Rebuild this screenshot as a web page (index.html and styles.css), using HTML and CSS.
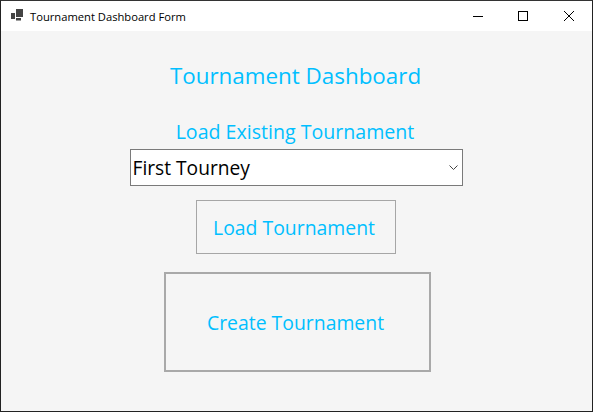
FILE: index.html
```html
<!DOCTYPE html>
<html>
<head>
	<meta charset="utf-8">
	<title>Tournament Dashboard Form</title>
	<link rel="stylesheet" href="styles.css">
</head>
<body>
<div class="win">
	<div class="titlebar">
		<svg class="appicon" width="16" height="16" viewBox="0 0 16 16">
			<rect x="1" y="5" width="4" height="6" fill="#444"/>
			<rect x="6" y="1" width="7" height="8" fill="#444"/>
			<rect x="6" y="10" width="5" height="2.5" fill="#444"/>
		</svg>
		<span class="wintitle">Tournament Dashboard Form</span>
		<div class="winbtns">
			<div class="winbtn">
				<svg width="12" height="12" viewBox="0 0 12 12"><path d="M1 6.5H11" stroke="#000" fill="none"/></svg>
			</div>
			<div class="winbtn winbtn-max">
				<svg width="12" height="12" viewBox="0 0 12 12"><rect x="1.5" y="1.5" width="9" height="9" stroke="#000" fill="none"/></svg>
			</div>
			<div class="winbtn">
				<svg width="12" height="12" viewBox="0 0 12 12"><path d="M1 1L11 11M11 1L1 11" stroke="#000" fill="none"/></svg>
			</div>
		</div>
	</div>
	<div class="form">
		<h1 class="heading">Tournament Dashboard</h1>
		<div class="label">Load Existing Tournament</div>
		<div class="combo">
			<span>First Tourney</span>
			<svg width="9" height="5" viewBox="0 0 9 5"><path d="M0.5 0.5L4.5 4.5L8.5 0.5" stroke="#444" fill="none"/></svg>
		</div>
		<button class="btn btn-load">Load Tournament</button>
		<button class="btn btn-create">Create Tournament</button>
	</div>
</div>
</body>
</html>
```

FILE: styles.css
```css
body{
	margin:0;
	padding:0;
	background:#f5f5f5;
	font-family:"Open Sans","Noto Sans",sans-serif;
}
.win{
	box-sizing:border-box;
	width:593px;
	height:412px;
	border:1px solid #222;
	border-top-color:#333;
	background:#f5f5f5;
	display:flex;
	flex-direction:column;
}
.titlebar{
	height:30px;
	background:#fff;
	display:flex;
	align-items:center;
	padding-left:9px;
	flex-shrink:0;
}
.appicon{
	margin-right:4px;
}
.wintitle{
	font-size:11.2px;
	color:#000;
}
.winbtns{
	margin-left:auto;
	margin-right:1px;
	display:flex;
}
.winbtn{
	width:44px;
	height:30px;
	display:flex;
	align-items:center;
	justify-content:center;
}
.winbtn-max{
	margin:0 2px 0 1px;
}
.form{
	display:flex;
	flex-direction:column;
	align-items:center;
	color:#00bfff;
}
.heading{
	margin:28px 0 0 0;
	padding-right:2px;
	box-sizing:border-box;
	font-size:22.4px;
	line-height:34px;
	font-weight:400;
	width:591px;
	text-align:center;
}
.label{
	margin-top:25px;
	font-size:19.6px;
	line-height:28px;
	margin-left:-3px;
}
.combo{
	box-sizing:border-box;
	width:333px;
	height:37px;
	margin-top:3px;
	margin-left:-1px;
	border:1px solid #7a7a7a;
	background:#fff;
	color:#000;
	font-size:19.2px;
	display:flex;
	align-items:center;
	justify-content:space-between;
	padding:0 4px 0 2px;
}
.btn{
	font-family:inherit;
	color:#00bfff;
	background:#f5f5f5;
}
.btn-load{
	width:200px;
	height:54px;
	margin-top:14px;
	margin-left:-1px;
	border:1px solid #a6a6a6;
	font-size:19.4px;
	padding:1px 4px 0 0;
}
.btn-create{
	width:267px;
	height:100px;
	margin-top:18px;
	margin-left:1px;
	border:2px solid #a9a9a9;
	font-size:19.4px;
	padding:1px 3px 0 0;
}
```
